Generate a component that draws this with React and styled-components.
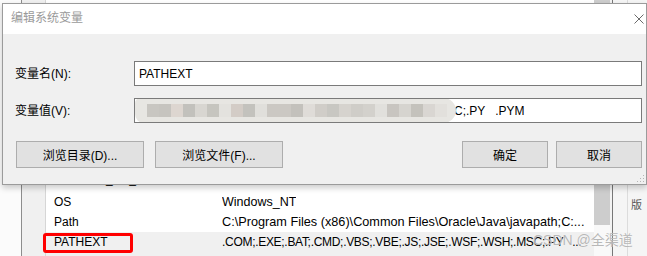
import React from 'react';
import styled, { createGlobalStyle } from 'styled-components';

const GlobalStyle = createGlobalStyle`
  html, body {
    margin: 0;
    padding: 0;
  }
  body {
    font-family: "Liberation Sans", "Noto Sans CJK SC", sans-serif;
    font-size: 12px;
    color: #000;
  }
`;

const mosaic = [
  '#c8c6c1', '#c6c4bf', '#ddd6d0', '#c2c1bc', '#d8d6d1', '#c6c5bf', '#e3e2de',
  '#d3ccc6', '#c3c2bd', '#e0dfdb', '#cbc8c3', '#cbc8c3', '#c3c1bc', '#dfdcd8',
  '#d0cdc8', '#c8c7c2', '#d6d3ce', '#cfcdc8', '#d3d1cc', '#e1e0dc', '#c8c5c0',
  '#d6d4cf', '#c4c2bc', '#d9d6d2', '#e2e0dc'
];

const rows = [
  { name: 'NUMBER_OF_PROCESSORS', value: '8', hidden: true, size: 12.5, spacing: 0 },
  { name: 'OS', value: 'Windows_NT', size: 12.5, spacing: 0 },
  { name: 'Path', value: 'C:\\Program Files (x86)\\Common Files\\Oracle\\Java\\javapath;C:...', size: 12.7, spacing: 0 },
  { name: 'PATHEXT', value: '.COM;.EXE;.BAT;.CMD;.VBS;.VBE;.JS;.JSE;.WSF;.WSH;.MSC;.PY   ...', selected: true, size: 12, spacing: -0.3 }
];

const App = () => {
  return (
    <>
      <GlobalStyle />
      <Desktop>
        <BackWindow>
          <SidePane />
          <Gutter />
          <ListPanel>
            {rows.map((r) => (
              <Row key={r.name} $selected={r.selected} $hidden={r.hidden}>
                <NameCell>{r.name}</NameCell>
                <ValueCell $size={r.size} $spacing={r.spacing}>{r.value}</ValueCell>
                {r.selected && <Annotation />}
              </Row>
            ))}
          </ListPanel>
          <Scrollbar>
            <Thumb />
          </Scrollbar>
          <Edge />
          <RightPane>
            <RightColumn>版</RightColumn>
          </RightPane>
        </BackWindow>

        <Dialog>
          <TitleBar>
            <Title>编辑系统变量</Title>
            <svg width="10" height="10" viewBox="0 0 10 10">
              <path d="M0.5 0.5 L9.5 9.5 M9.5 0.5 L0.5 9.5" stroke="#6b6b6b" strokeWidth="1" fill="none" />
            </svg>
          </TitleBar>
          <Body>
            <FieldGrid>
              <Label>变量名(N):</Label>
              <Input>PATHEXT</Input>
              <Label>变量值(V):</Label>
              <Input>
                <Mosaic>
                  {mosaic.map((c, i) => (
                    <Cell key={i} $c={c} />
                  ))}
                </Mosaic>
                <InputText>C;.PY   .PYM</InputText>
              </Input>
            </FieldGrid>
            <ButtonRow>
              <ButtonGroup $gap={11}>
                <Button $w={128}>浏览目录(D)...</Button>
                <Button $w={128}>浏览文件(F)...</Button>
              </ButtonGroup>
              <ButtonGroup $gap={8}>
                <Button $w={86}>确定</Button>
                <Button $w={86}>取消</Button>
              </ButtonGroup>
            </ButtonRow>
          </Body>
          <Grip width="8" height="8" viewBox="0 0 8 8">
            <rect x="6" y="0" width="1" height="1" fill="#b5b5b5" />
            <rect x="3" y="3" width="1" height="1" fill="#b5b5b5" />
            <rect x="6" y="3" width="1" height="1" fill="#b5b5b5" />
            <rect x="0" y="6" width="1" height="1" fill="#b5b5b5" />
            <rect x="3" y="6" width="1" height="1" fill="#b5b5b5" />
            <rect x="6" y="6" width="1" height="1" fill="#b5b5b5" />
          </Grip>
        </Dialog>

        <Watermark>CSDN @全渠道</Watermark>
      </Desktop>
    </>
  );
};

const Desktop = styled.div`
  position: relative;
  width: 647px;
  height: 256px;
  overflow: hidden;
  background: #f0f0f0;
`;

// window behind the dialog
const BackWindow = styled.div`
  display: flex;
  height: 100%;
`;

const SidePane = styled.div`
  width: 21px;
  flex-shrink: 0;
  background: #fbfbfb;
  border-right: 1px solid #8d8d8d;
`;

const Gutter = styled.div`
  width: 23px;
  flex-shrink: 0;
  background: #f0f0f0;
  border-right: 1px solid #d6d6d6;
`;

const ListPanel = styled.div`
  width: 548px;
  flex-shrink: 0;
  background: #fff;
  padding-top: 170px;
  box-sizing: border-box;
`;

const rowHeight = (p) => (p.$selected ? 24 : p.$hidden ? 22 : 20);
const rowLine = (p) => (p.$selected ? 21 : p.$hidden ? 19 : 20);

const Row = styled.div`
  position: relative;
  display: flex;
  height: ${(p) => rowHeight(p)}px;
  line-height: ${(p) => rowLine(p)}px;
  padding-left: 8px;
  background: ${(p) => (p.$selected ? '#f0f0f0' : 'transparent')};
  white-space: nowrap;
`;

const NameCell = styled.span`
  width: 168px;
  flex-shrink: 0;
`;

const ValueCell = styled.span`
  overflow: hidden;
  white-space: pre;
  font-size: ${(p) => p.$size}px;
  letter-spacing: ${(p) => p.$spacing}px;
`;

const Annotation = styled.div`
  position: absolute;
  left: -3px;
  top: 1px;
  width: 90px;
  height: 20px;
  box-sizing: border-box;
  border: 3px solid #f00;
  border-radius: 3px;
`;

const Scrollbar = styled.div`
  width: 16px;
  flex-shrink: 0;
  background: #f9f9f9;
`;

const Thumb = styled.div`
  height: 225px;
  background: #cdcdcd;
`;

const Edge = styled.div`
  width: 2px;
  flex-shrink: 0;
  background: #f3f3f3;
  border-right: 1px solid #777;
`;

const RightPane = styled.div`
  flex: 1;
  padding-left: 14px;
  background: #f5f5f5;
  display: flex;
`;

const RightColumn = styled.div`
  flex: 1;
  border-left: 1px solid #dcdcdc;
  padding: 196px 0 0 3px;
  font-size: 11px;
  color: #555;
`;

// dialog
const Dialog = styled.div`
  position: absolute;
  left: 2px;
  top: 3px;
  width: 645px;
  height: 182px;
  box-sizing: border-box;
  border: 1px solid #9b9b9b;
  background: #f0f0f0;
  box-shadow: 0 3px 6px rgba(0, 0, 0, 0.2);
  display: flex;
  flex-direction: column;
`;

const TitleBar = styled.div`
  height: 30px;
  flex-shrink: 0;
  background: #fff;
  display: flex;
  align-items: center;
  justify-content: space-between;
  padding: 0 2px 0 8px;
`;

const Title = styled.span`
  color: #9a9a9a;
  font-size: 12px;
  line-height: 16px;
  margin-top: -2px;
`;

const Body = styled.div`
  padding: 27px 4px 0 12px;
`;

const FieldGrid = styled.div`
  display: grid;
  grid-template-columns: 119px 1fr;
  row-gap: 12px;
  align-items: center;
`;

const Label = styled.span`
  font-size: 12px;
  line-height: 16px;
`;

const Input = styled.div`
  height: 25px;
  box-sizing: border-box;
  border: 1px solid #7a7a7a;
  background: #fff;
  padding: 0 4px;
  display: flex;
  align-items: center;
  overflow: hidden;
  white-space: pre;
  font-size: 12px;
`;

const Mosaic = styled.span`
  display: flex;
  align-items: center;
  flex-shrink: 0;
  width: 321px;
  height: 25px;
  margin: 0 -2px 0 -4px;
  padding-left: 12px;
  box-sizing: border-box;
  background: #e7e6e2;
  border-radius: 6px 14px 14px 10px;
  filter: blur(0.6px);
`;

const Cell = styled.span`
  width: 12px;
  height: 13px;
  background: ${(p) => p.$c};
`;

const InputText = styled.span`
  white-space: pre;
`;

const ButtonRow = styled.div`
  margin-top: 18px;
  padding-left: 1px;
  display: flex;
  justify-content: space-between;
`;

const ButtonGroup = styled.div`
  display: flex;
  gap: ${(p) => p.$gap}px;
`;

const Button = styled.button`
  width: ${(p) => p.$w}px;
  height: 27px;
  padding: 0;
  background: #e1e1e1;
  border: 1px solid #adadad;
  font-family: "Liberation Sans", "Noto Sans CJK SC", sans-serif;
  font-size: 12px;
  color: #000;
`;

const Grip = styled.svg`
  position: absolute;
  right: 1px;
  bottom: 1px;
`;

const Watermark = styled.div`
  position: absolute;
  left: 533px;
  top: 231px;
  font-size: 14px;
  line-height: 18px;
  color: rgba(175, 175, 175, 0.9);
  text-shadow: 0 0 1px rgba(255, 255, 255, 0.8);
`;

export default App;
